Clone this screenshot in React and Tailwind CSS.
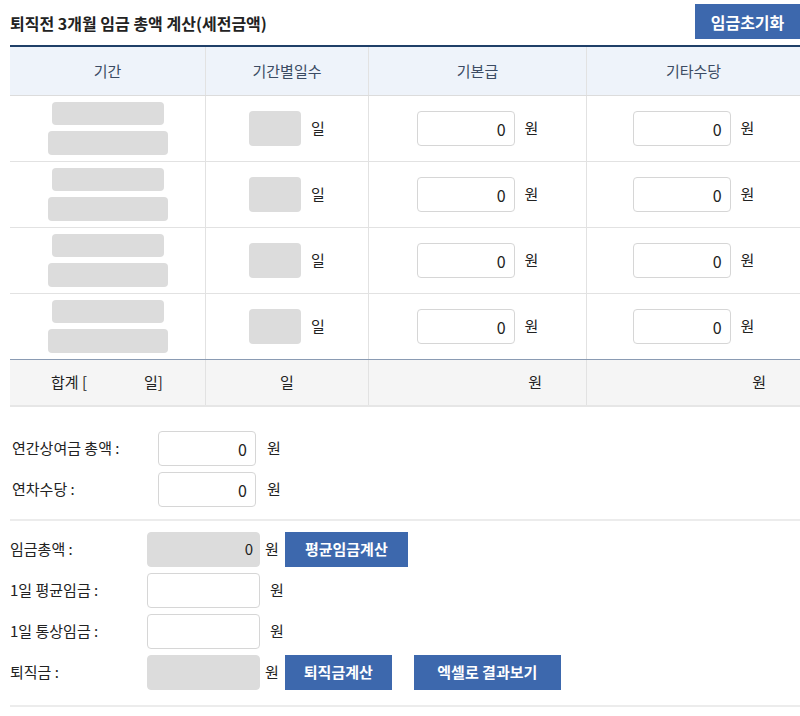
import React from 'react';

const F = { fontFamily: '"Noto Sans CJK KR", "Noto Sans", sans-serif' };

function Period() {
  return (
    <div className="flex flex-col items-center gap-[6px]">
      <div className="w-[112px] h-[23px] rounded bg-[#dcdcdc]" />
      <div className="w-[120px] h-[24px] rounded bg-[#dcdcdc]" />
    </div>
  );
}

function Money() {
  return (
    <div className="flex items-center justify-center gap-[10px]">
      <div className="w-[98px] h-[35px] border border-[#d6d6d6] rounded flex items-center justify-end pr-[8px] text-[16px]">0</div>
      <span>원</span>
    </div>
  );
}

function Row() {
  return (
    <div className="grid grid-cols-[196px_163px_218px_213px] h-[66px] border-b border-[#e2e2e2]">
      <div className="flex items-center justify-center border-r border-[#e2e2e2]"><Period /></div>
      <div className="flex items-center justify-center gap-[10px] border-r border-[#e2e2e2]">
        <div className="w-[52px] h-[35px] rounded bg-[#dcdcdc]" />
        <span>일</span>
      </div>
      <div className="flex items-center justify-center border-r border-[#e2e2e2]"><Money /></div>
      <div className="flex items-center justify-center"><Money /></div>
    </div>
  );
}

function Btn({ children, w }) {
  return (
    <div className={`h-[35px] ${w} bg-[#3d68ad] text-white font-bold flex items-center justify-center`}>{children}</div>
  );
}

function Line({ label, gray, value, children }) {
  return (
    <div className="flex items-center h-[35px]">
      <span className="w-[137px]">{label}</span>
      <div className={`w-[113px] h-[35px] rounded border border-[#d6d6d6] flex items-center justify-end pr-[6px] ${gray ? 'bg-[#dcdcdc] border-[#dcdcdc]' : ''}`}>{value}</div>
      <span className={gray ? 'ml-[5px] mr-[6px]' : 'ml-[10px]'}>원</span>
      {children}
    </div>
  );
}

export default function App() {
  return (
    <div className="w-[800px] h-[716px] overflow-hidden bg-white text-[#222] text-[15px] pl-[10px]" style={F}>
      <div className="flex items-center justify-between h-[45px]">
        <h2 className="text-[16px] font-bold">퇴직전 3개월 임금 총액 계산(세전금액)</h2>
        <div className="h-[35px] w-[105px] bg-[#3d68ad] text-white font-bold text-[16px] flex items-center justify-center mb-[2px]">임금초기화</div>
      </div>
      <div className="border-t-2 border-[#1f3f68]">
        <div className="grid grid-cols-[196px_163px_218px_213px] h-[49px] bg-[#eef3fa] text-[#3b4b63] border-b border-[#dcdcdc]">
          <div className="flex items-center justify-center border-r border-[#e2e2e2]">기간</div>
          <div className="flex items-center justify-center border-r border-[#e2e2e2]">기간별일수</div>
          <div className="flex items-center justify-center border-r border-[#e2e2e2]">기본급</div>
          <div className="flex items-center justify-center">기타수당</div>
        </div>
        <Row /><Row /><Row />
        <div className="grid grid-cols-[196px_163px_218px_213px] h-[65px]">
          <div className="flex items-center justify-center border-r border-[#e2e2e2]"><Period /></div>
          <div className="flex items-center justify-center gap-[10px] border-r border-[#e2e2e2]">
            <div className="w-[52px] h-[35px] rounded bg-[#dcdcdc]" /><span>일</span>
          </div>
          <div className="flex items-center justify-center border-r border-[#e2e2e2]"><Money /></div>
          <div className="flex items-center justify-center"><Money /></div>
        </div>
        <div className="grid grid-cols-[196px_163px_218px_213px] h-[48px] bg-[#f5f5f5] border-t border-[#8a9bb3] border-b-2 border-b-[#e6e6e6]">
          <div className="flex items-center border-r border-[#e2e2e2] pl-[41px]">합계 [<span className="ml-[57px]">일]</span></div>
          <div className="flex items-center justify-center border-r border-[#e2e2e2]">일</div>
          <div className="flex items-center justify-end pr-[44px] border-r border-[#e2e2e2]">원</div>
          <div className="flex items-center justify-end pr-[34px]">원</div>
        </div>
      </div>
      <div className="pt-[24px] pb-[12px] flex flex-col gap-[6px] border-b-2 border-[#ececec]">
        {['연간상여금 총액 :', '연차수당 :'].map((l) => (
          <div key={l} className="flex items-center h-[35px]">
            <span className="w-[148px] pl-[2px]">{l}</span>
            <div className="w-[98px] h-[35px] border border-[#d6d6d6] rounded flex items-center justify-end pr-[8px] text-[16px]">0</div>
            <span className="ml-[11px]">원</span>
          </div>
        ))}
      </div>
      <div className="pt-[11px] pb-[15px] flex flex-col gap-[6px] border-b-2 border-[#ececec]">
        <Line label="임금총액 :" gray value="0"><Btn w="w-[123px]">평균임금계산</Btn></Line>
        <Line label="1일 평균임금 :" />
        <Line label="1일 통상임금 :" />
        <Line label="퇴직금 :" gray>
          <Btn w="w-[107px]">퇴직금계산</Btn>
          <div className="ml-[22px]"><Btn w="w-[147px]">엑셀로 결과보기</Btn></div>
        </Line>
      </div>
    </div>
  );
}
